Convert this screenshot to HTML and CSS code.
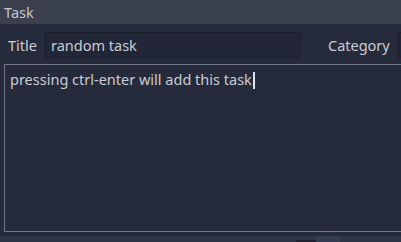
FILE: index.html
```html
<!DOCTYPE html>
<html lang="en">

<head>
  <meta charset="UTF-8">
  <meta name="viewport" content="width=device-width, initial-scale=1.0">
  <title>Task</title>
  <link rel="stylesheet" href="styles.css">
</head>

<body>
  <div class="titlebar">Task</div>
  <div class="fields">
    <span class="label label-title">Title</span>
    <div class="input input-title">random task</div>
    <span class="label label-category">Category</span>
    <div class="input input-category"></div>
  </div>
  <div class="editor">pressing ctrl-enter will add this task<span class="caret"></span></div>
  <div class="footer">
    <div class="strip">
      <span class="tab tab-dark"></span>
      <span class="tab tab-light"></span>
    </div>
  </div>
</body>

</html>
```

FILE: styles.css
```css
body {
  margin: 0;
  width: 401px;
  height: 242px;
  overflow: hidden;
  background-color: #262b3b;
  color: #c9ccd3;
  font-family: "Noto Sans", "DejaVu Sans", sans-serif;
  font-size: 14.5px;
}

.titlebar {
  height: 24px;
  line-height: 24px;
  padding-left: 4px;
  background-color: #3a404d;
  color: #c4c7ce;
}

.fields {
  display: flex;
  align-items: center;
  height: 26px;
  padding: 8px 0 6px 8px;
  white-space: nowrap;
}

.label-title {
  margin-right: 8px;
}

.label-category {
  margin-left: 27px;
  margin-right: 8px;
}

.input {
  flex: none;
  box-sizing: border-box;
  height: 26px;
  line-height: 24px;
  padding-left: 5px;
  background-color: #222737;
  border: 1px solid #1b1f2b;
}

.input-title {
  width: 256px;
}

.input-category {
  flex: 1;
  border-right: none;
}

.editor {
  box-sizing: border-box;
  height: 168px;
  margin-left: 4px;
  padding: 5px 5px;
  line-height: 19px;
  border: 1px solid #6f7585;
  border-right: none;
}

.caret {
  display: inline-block;
  width: 2px;
  height: 17px;
  margin-left: 1px;
  vertical-align: -4px;
  background-color: #dfe2e8;
}

.footer {
  height: 10px;
  padding-top: 4px;
  box-sizing: border-box;
}

.strip {
  display: flex;
  height: 6px;
  background-color: #2e3548;
  padding-left: 296px;
  align-items: flex-end;
}

.tab {
  height: 2px;
}

.tab-dark {
  width: 20px;
  background-color: #1f2330;
}

.tab-light {
  width: 24px;
  height: 6px;
  background-color: #343c51;
}
```
